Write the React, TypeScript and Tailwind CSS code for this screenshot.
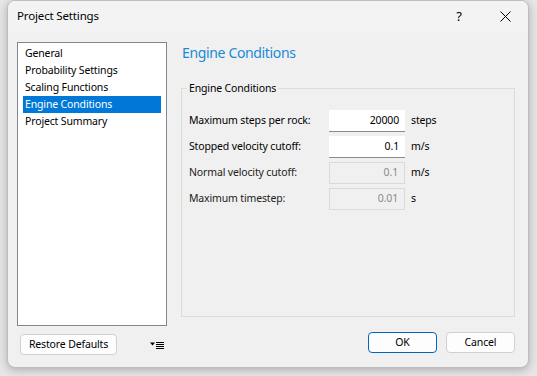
import React from "react";

const font = { fontFamily: '"Noto Sans", "Open Sans", sans-serif' };

function Row({ label, value, unit, disabled }: { label: string; value: string; unit: string; disabled?: boolean }) {
  return (
    <div className="flex items-center h-[22px] mb-[4px]">
      <div className={`w-[140px] whitespace-nowrap ${disabled ? "text-[#222222]" : "text-black"}`}>{label}</div>
      <div
        className={`w-[76px] h-[22px] flex items-center justify-end pr-[6px] box-border ${
          disabled
            ? "bg-[#f0f0f0] border border-[#dadada] text-[#8a8a8a]"
            : "bg-white border-b border-[#8a8a8a] text-black"
        }`}
      >
        {value}
      </div>
      <div className="ml-[6px]">{unit}</div>
    </div>
  );
}

export default function App() {
  const items = ["General", "Probability Settings", "Scaling Functions", "Engine Conditions", "Project Summary"];
  return (
    <div className="w-[537px] h-[376px] bg-[#e6e6e6] overflow-hidden text-[10.5px] tracking-[-0.15px] text-black" style={font}>
      <div className="ml-[7px] w-[522px] h-[368px] rounded-[8px] border border-[#bdbdbd] bg-[#f0f0f0] shadow-[0_2px_8px_rgba(0,0,0,0.25)] flex flex-col overflow-hidden">
        <div className="h-[31px] bg-[#f3f3f3] flex items-center pl-[9px] shrink-0">
          <div className="flex-1 text-[11.5px] -mt-[1px]">Project Settings</div>
          <div className="w-[46px] text-center text-[13px]">?</div>
          <div className="w-[46px] flex justify-center">
            <svg width="11" height="11" viewBox="0 0 11 11">
              <path d="M0.5 0.5 L10.5 10.5 M10.5 0.5 L0.5 10.5" stroke="#000" strokeWidth="1" />
            </svg>
          </div>
        </div>
        <div className="flex-1 flex pl-[9px] pr-[13px] pt-[10px]">
          <div className="w-[150px] flex flex-col">
            <div className="h-[284px] bg-white border border-[#828790] pt-[2px] px-[5px]">
              {items.map((t) => (
                <div
                  key={t}
                  className={`h-[17px] leading-[17px] pl-[2px] ${t === "Engine Conditions" ? "bg-[#0078d7] text-white" : ""}`}
                >
                  {t}
                </div>
              ))}
            </div>
            <div className="flex items-center mt-[8px]">
              <div className="ml-[3px] w-[97px] h-[21px] rounded-[4px] border border-[#d0d0d0] bg-[#fdfdfd] flex items-center justify-center">
                Restore Defaults
              </div>
              <svg className="ml-[33px]" width="14" height="8" viewBox="0 0 14 8">
                <path d="M0 1.5 H5 L2.5 4.5 Z" fill="#000" />
                <rect x="6" y="1" width="8" height="1" fill="#000" />
                <rect x="6" y="3" width="8" height="1" fill="#000" />
                <rect x="6" y="5" width="8" height="1" fill="#000" />
                <rect x="6" y="7" width="8" height="1" fill="#000" />
              </svg>
            </div>
          </div>
          <div className="flex-1 ml-[14px] flex flex-col">
            <div className="text-[14px] tracking-[-0.35px] text-[#1a8ad6] leading-[20px] mt-[1px] ml-[1px]">Engine Conditions</div>
            <div className="relative mt-[25px] h-[229px] border border-[#dcdcdc]">
              <div className="absolute -top-[9px] left-[5px] px-[2px] bg-[#f0f0f0] leading-[16px]">Engine Conditions</div>
              <div className="pt-[21px] pl-[7px]">
                <Row label="Maximum steps per rock:" value="20000" unit="steps" />
                <Row label="Stopped velocity cutoff:" value="0.1" unit="m/s" />
                <Row label="Normal velocity cutoff:" value="0.1" unit="m/s" disabled />
                <Row label="Maximum timestep:" value="0.01" unit="s" disabled />
              </div>
            </div>
            <div className="flex justify-end mt-[15px] gap-[9px] pr-[0px]">
              <div className="w-[69px] h-[21px] rounded-[4px] border border-[#0067c0] bg-[#fdfdfd] flex items-center justify-center">OK</div>
              <div className="w-[69px] h-[21px] rounded-[4px] border border-[#d0d0d0] bg-[#fdfdfd] flex items-center justify-center">Cancel</div>
            </div>
          </div>
        </div>
      </div>
    </div>
  );
}
